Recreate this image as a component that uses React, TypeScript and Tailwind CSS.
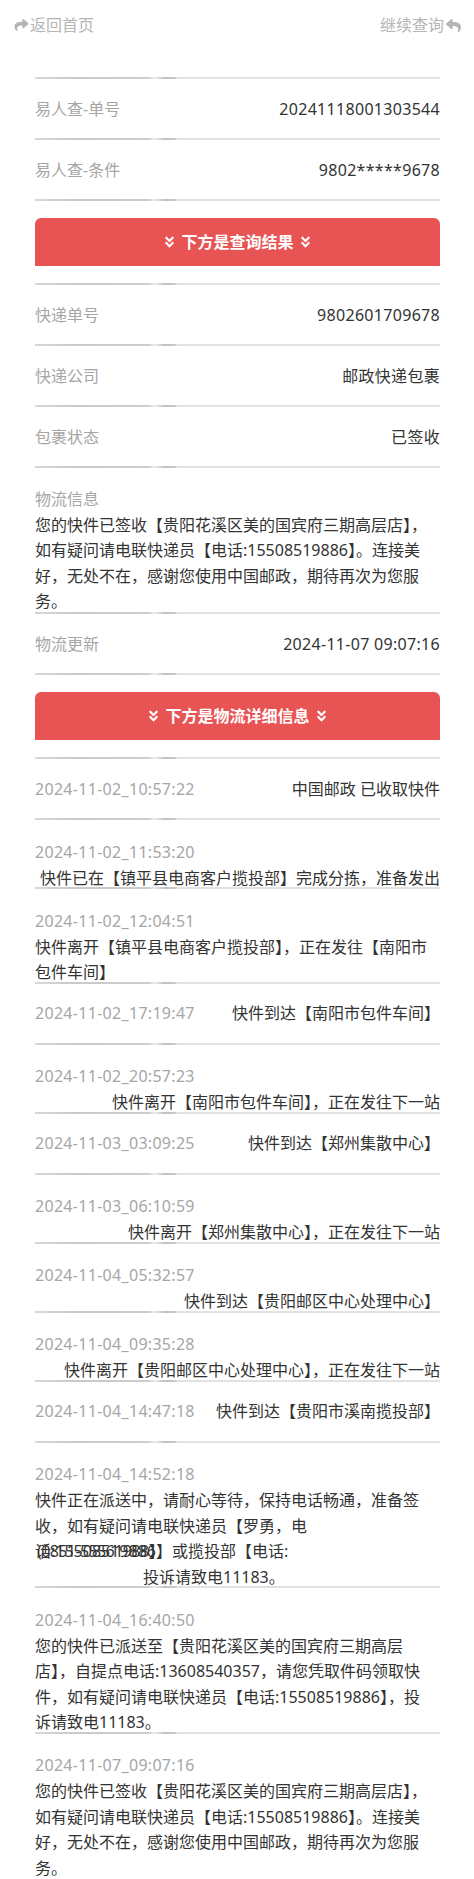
import React from "react";
import { FaShare, FaReply, FaAngleDoubleDown } from "react-icons/fa";

const Line = () => (
  <div className="h-[2px] bg-[linear-gradient(to_right,#d8d8d8_0%,#c9c9c9_10%,#cdcdcd_28%,#ececec_29.5%,#c2c2c2_32%,#c8c8c8_34.5%,#e2e2e2_35.2%,#e2e2e2_100%)]" />
);

const Row = ({ label, value }: { label: string; value: string }) => (
  <div className="flex h-[59px] items-center justify-between pt-[2px] leading-[25.5px]">
    <span className="text-[#a6a6a6]">{label}</span>
    <span className="tracking-[0.3px] text-[#333333]">{value}</span>
  </div>
);

const Banner = ({ text }: { text: string }) => (
  <div className="mt-[17px] mb-[17px] flex h-[48px] items-center justify-center gap-[7px] rounded-t-[6px] bg-[#e85454] text-white">
    <FaAngleDoubleDown className="h-[14px] w-[9px]" />
    <span className="font-bold leading-[25px]">{text}</span>
    <FaAngleDoubleDown className="h-[14px] w-[9px]" />
  </div>
);

const Lines = ({ lines }: { lines: string[] }) => (
  <div className="leading-[25.5px] text-[#333333]">
    {lines.map((l, i) => (
      <div key={i} className="whitespace-nowrap">
        {l}
      </div>
    ))}
  </div>
);

type Item =
  | { kind: "inline"; date: string; text: string }
  | { kind: "right"; date: string; text: string }
  | { kind: "multi"; date: string; lines: string[] }
  | { kind: "garbled"; date: string };

const signed = [
  "您的快件已签收【贵阳花溪区美的国宾府三期高层店】，",
  "如有疑问请电联快递员【电话:15508519886】。连接美",
  "好，无处不在，感谢您使用中国邮政，期待再次为您服",
  "务。",
];

const items: Item[] = [
  { kind: "inline", date: "2024-11-02_10:57:22", text: "中国邮政 已收取快件" },
  { kind: "right", date: "2024-11-02_11:53:20", text: "快件已在【镇平县电商客户揽投部】完成分拣，准备发出" },
  {
    kind: "multi",
    date: "2024-11-02_12:04:51",
    lines: ["快件离开【镇平县电商客户揽投部】，正在发往【南阳市", "包件车间】"],
  },
  { kind: "inline", date: "2024-11-02_17:19:47", text: "快件到达【南阳市包件车间】" },
  { kind: "right", date: "2024-11-02_20:57:23", text: "快件离开【南阳市包件车间】，正在发往下一站" },
  { kind: "inline", date: "2024-11-03_03:09:25", text: "快件到达【郑州集散中心】" },
  { kind: "right", date: "2024-11-03_06:10:59", text: "快件离开【郑州集散中心】，正在发往下一站" },
  { kind: "right", date: "2024-11-04_05:32:57", text: "快件到达【贵阳邮区中心处理中心】" },
  { kind: "right", date: "2024-11-04_09:35:28", text: "快件离开【贵阳邮区中心处理中心】，正在发往下一站" },
  { kind: "inline", date: "2024-11-04_14:47:18", text: "快件到达【贵阳市溪南揽投部】" },
  { kind: "garbled", date: "2024-11-04_14:52:18" },
  {
    kind: "multi",
    date: "2024-11-04_16:40:50",
    lines: [
      "您的快件已派送至【贵阳花溪区美的国宾府三期高层",
      "店】，自提点电话:13608540357，请您凭取件码领取快",
      "件，如有疑问请电联快递员【电话:15508519886】，投",
      "诉请致电11183。",
    ],
  },
  { kind: "multi", date: "2024-11-07_09:07:16", lines: signed },
];

const Date = ({ d }: { d: string }) => (
  <div className="leading-[28px] tracking-[0.3px] text-[#a6a6a6]">{d}</div>
);

const Entry = ({ item }: { item: Item }) => {
  if (item.kind === "inline") {
    return (
      <div className="flex h-[59px] items-center justify-between pt-[2px] leading-[25.5px]">
        <span className="tracking-[0.3px] text-[#a6a6a6]">{item.date}</span>
        <span className="text-[#333333]">{item.text}</span>
      </div>
    );
  }
  return (
    <div className="flex flex-col pt-[17.5px]">
      <Date d={item.date} />
      <div className="mb-[-4px]">
        {item.kind === "right" && (
          <div className="flex justify-end leading-[25.5px] text-[#333333]">
            <span className="whitespace-nowrap">{item.text}</span>
          </div>
        )}
        {item.kind === "multi" && <Lines lines={item.lines} />}
        {item.kind === "garbled" && (
          <div className="leading-[25.5px] text-[#333333]">
            <div className="whitespace-nowrap">快件正在派送中，请耐心等待，保持电话畅通，准备签</div>
            <div className="whitespace-nowrap">收，如有疑问请电联快递员【罗勇，电</div>
            <div className="flex whitespace-nowrap">
              <span className="relative">
                <span>话:15508519886】</span>
                <span className="absolute left-[2px] top-0 tracking-[-0.6px]">(0851-55561988】</span>
              </span>
              <span>或揽投部【电话:</span>
            </div>
            <div className="whitespace-nowrap pl-[108px]">投诉请致电11183。</div>
          </div>
        )}
      </div>
    </div>
  );
};

export default function App() {
  return (
    <div className="w-[474px] bg-white pb-[3px] text-[16px] font-['Noto_Sans','Noto_Sans_CJK_SC',sans-serif]">
      <header className="flex h-[50px] items-center justify-between pl-[14px] pr-[12px] text-[#b5b5b5]">
        <div className="flex items-center gap-[1px]">
          <FaShare className="h-[14px] w-[15px]" />
          <span>返回首页</span>
        </div>
        <div className="flex items-center gap-[1px]">
          <span>继续查询</span>
          <FaReply className="h-[15px] w-[17px]" />
        </div>
      </header>
      <main className="pl-[35px] pr-[34px] pt-[27px]">
        <Line />
        <Row label="易人查-单号" value="20241118001303544" />
        <Line />
        <Row label="易人查-条件" value="9802*****9678" />
        <Line />
        <Banner text="下方是查询结果" />
        <Line />
        <Row label="快递单号" value="9802601709678" />
        <Line />
        <Row label="快递公司" value="邮政快递包裹" />
        <Line />
        <Row label="包裹状态" value="已签收" />
        <Line />
        <div className="flex h-[144px] flex-col pt-[19px] leading-[25.5px]">
          <div className="text-[#a6a6a6]">物流信息</div>
          <Lines lines={signed} />
        </div>
        <Line />
        <Row label="物流更新" value="2024-11-07 09:07:16" />
        <Line />
        <Banner text="下方是物流详细信息" />
        <Line />
        {items.map((it, i) => (
          <React.Fragment key={i}>
            <Entry item={it} />
            {i < items.length - 1 && <Line />}
          </React.Fragment>
        ))}
      </main>
    </div>
  );
}
